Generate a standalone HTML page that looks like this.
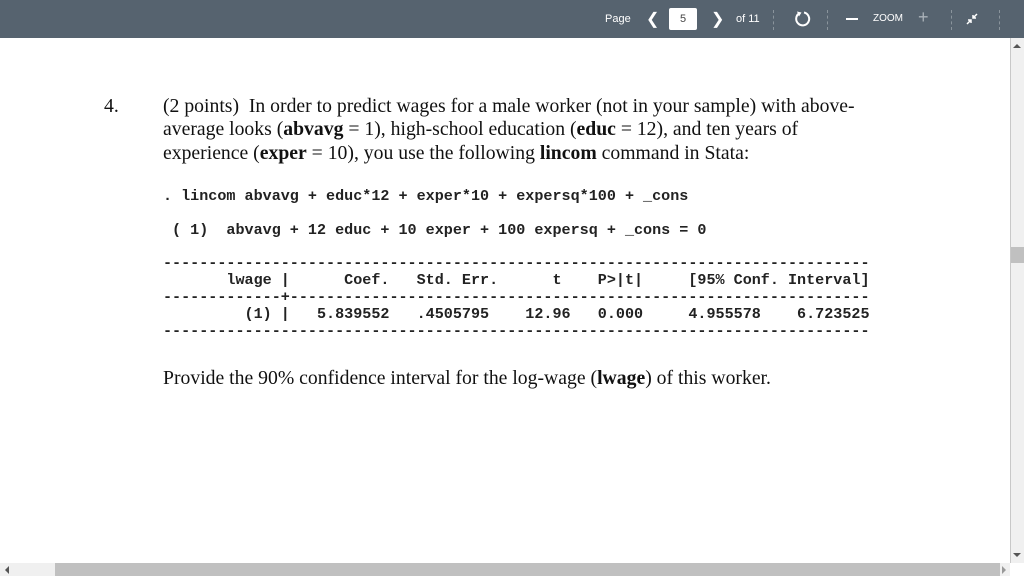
<!DOCTYPE html>
<html><head><style>
body{margin:0;width:1024px;height:576px;overflow:hidden;background:#fff;position:relative;font-family:"Liberation Serif",serif}
.tb{position:absolute;left:0;top:0;width:1024px;height:38px;background:#56636f;color:#fff;font-family:"Liberation Sans",sans-serif;font-size:11px}
.tb span{position:absolute}
.sep{position:absolute;top:10px;height:20px;border-left:1px dashed #8a949c}
.t{position:absolute;font-size:19.7px;color:#111;white-space:nowrap;left:163px}
pre{position:absolute;margin:0;font-family:"Liberation Mono",monospace;font-size:15.1px;font-weight:bold;color:#222;left:163px;line-height:17px}
</style></head><body>
<div class="tb">
<span style="left:605px;top:13px">Page</span>
<span style="left:646px;top:9px;font-size:16px">&#10094;</span>
<div style="position:absolute;left:669px;top:8px;width:28px;height:22px;background:#fff;border-radius:2px;color:#444;text-align:center;line-height:22px;font-size:11px">5</div>
<span style="left:711px;top:9px;font-size:16px">&#10095;</span>
<span style="left:736px;top:13px">of 11</span>
<div class="sep" style="left:773px"></div>
<svg style="position:absolute;left:794px;top:10px" width="18" height="18" viewBox="0 0 18 18"><path d="M5 3.5A6.5 6.5 0 1 0 10 2.5" fill="none" stroke="#fff" stroke-width="2"/><path d="M3 1.5L7.5 2.5L5 6.5Z" fill="#fff"/></svg>
<div class="sep" style="left:827px"></div>
<div style="position:absolute;left:846px;top:18px;width:12px;height:2px;background:#fff"></div>
<span style="left:873px;top:13px;font-size:10px">ZOOM</span>
<span style="left:918px;top:7px;font-size:18px;color:#aab2b9">+</span>
<div class="sep" style="left:951px"></div>
<svg style="position:absolute;left:965px;top:12px" width="14" height="14" viewBox="0 0 14 14"><path d="M2 12L6 8M3 8H6V11M12 2L8 6M8 3V6H11" stroke="#fff" stroke-width="1.5" fill="none"/></svg>
<div class="sep" style="left:999px"></div>
</div>
<div style="position:absolute;left:1010px;top:38px;width:14px;height:525px;background:#f0f0f0;border-left:1px solid #c8c8c8"></div>
<div style="position:absolute;left:1011px;top:247px;width:13px;height:16px;background:#c0c0c0"></div>
<div style="position:absolute;left:1013px;top:44px;border:4px solid transparent;border-bottom:4px solid #555;border-top:0"></div>
<div style="position:absolute;left:1013px;top:553px;border:4px solid transparent;border-top:4px solid #555;border-bottom:0"></div>
<div style="position:absolute;left:0;top:563px;width:1010px;height:13px;background:#f0f0f0"></div>
<div style="position:absolute;left:55px;top:563px;width:945px;height:13px;background:#c0c0c0"></div>
<div style="position:absolute;left:5px;top:566px;border:4px solid transparent;border-right:4px solid #555;border-left:0"></div>
<div style="position:absolute;left:1002px;top:566px;border:4px solid transparent;border-left:4px solid #999;border-right:0"></div>

<div class="t" style="left:104px;top:95px">4.</div>
<div class="t" style="top:95px">(2 points)&nbsp; In order to predict wages for a male worker (not in your sample) with above-</div>
<div class="t" style="top:118px">average looks (<b>abvavg</b> = 1), high-school education (<b>educ</b> = 12), and ten years of</div>
<div class="t" style="top:142px">experience (<b>exper</b> = 10), you use the following <b>lincom</b> command in Stata:</div>
<pre style="top:188px">. lincom abvavg + educ*12 + exper*10 + expersq*100 + _cons</pre>
<pre style="top:222px"> ( 1)  abvavg + 12 educ + 10 exper + 100 expersq + _cons = 0</pre>
<pre style="top:255px">------------------------------------------------------------------------------
       lwage |      Coef.   Std. Err.      t    P>|t|     [95% Conf. Interval]
-------------+----------------------------------------------------------------
         (1) |   5.839552   .4505795    12.96   0.000     4.955578    6.723525
------------------------------------------------------------------------------</pre>
<div class="t" style="top:367px">Provide the 90% confidence interval for the log-wage (<b>lwage</b>) of this worker.</div>
</body></html>
